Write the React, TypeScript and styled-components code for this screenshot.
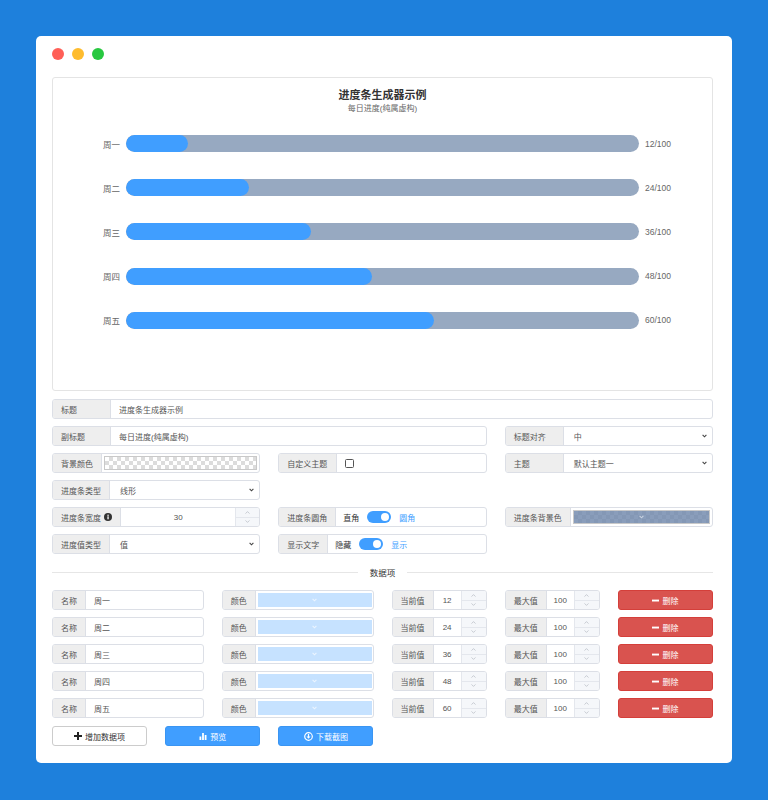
import * as React from 'react';
import styled, { createGlobalStyle } from 'styled-components';

const FONT = `"Liberation Sans", "Noto Sans CJK SC", sans-serif`;

interface Item {
    name: string;
    value: number;
    max: number;
}

const items: Item[] = [
    { name: '周一', value: 12, max: 100 },
    { name: '周二', value: 24, max: 100 },
    { name: '周三', value: 36, max: 100 },
    { name: '周四', value: 48, max: 100 },
    { name: '周五', value: 60, max: 100 },
];

const GlobalStyle = createGlobalStyle`
    html, body {
        margin: 0;
        padding: 0;
        background: #1e80dc;
    }
    body {
        font-family: ${FONT};
    }
`;

const Page = styled.div`
    box-sizing: border-box;
    min-height: 800px;
    padding: 36px 36px 37px;
`;

const Window = styled.div`
    background: #fff;
    border-radius: 5px;
    padding: 12px 19px 17px 16px;
`;

const Dots = styled.div`
    display: flex;
    gap: 8px;
    padding-left: 0;
    margin-bottom: 17px;
`;

const Dot = styled.span<{ $color: string }>`
    width: 12px;
    height: 12px;
    border-radius: 50%;
    background: ${p => p.$color};
`;

const ChartPanel = styled.div`
    box-sizing: border-box;
    height: 314px;
    border: 1px solid #e4e4e4;
    border-radius: 3px;
    padding-top: 10px;
`;

const ChartTitle = styled.div`
    text-align: center;
    font-size: 11px;
    font-weight: bold;
    line-height: 14px;
    color: #333;
`;

const ChartSubtitle = styled.div`
    text-align: center;
    font-size: 8px;
    line-height: 10px;
    margin-top: 2px;
    color: #666;
`;

const BarList = styled.div`
    display: flex;
    flex-direction: column;
    gap: 27.2px;
    margin-top: 21px;
`;

const BarRow = styled.div`
    display: grid;
    grid-template-columns: 67px 1fr 67px;
    column-gap: 6px;
    align-items: center;
`;

const BarLabel = styled.div`
    text-align: right;
    font-size: 8.5px;
    color: #666;
`;

const Track = styled.div`
    height: 17px;
    border-radius: 9px;
    background: #97a9c1;
    overflow: hidden;
`;

const Fill = styled.div`
    height: 100%;
    border-radius: 9px;
    background: #409eff;
`;

const BarValue = styled.div`
    font-size: 8.5px;
    color: #666;
`;

const Grid = styled.div<{ $top?: number }>`
    display: grid;
    grid-template-columns: repeat(12, 1fr);
    column-gap: 18px;
    row-gap: 7px;
    margin-top: ${p => p.$top ?? 0}px;
`;

const Spacer = styled.div<{ $span: number }>`
    grid-column: span ${p => p.$span};
`;

const Group = styled.div<{ $span: number }>`
    grid-column: span ${p => p.$span};
    display: flex;
    height: 20px;
    box-sizing: border-box;
    min-width: 0;
    border: 1px solid #dcdfe6;
    border-radius: 3px;
    overflow: hidden;
    background: #fff;
`;

const Addon = styled.div<{ $w: number }>`
    flex: 0 0 ${p => p.$w}px;
    box-sizing: border-box;
    display: flex;
    align-items: center;
    gap: 3px;
    padding: 0 8px;
    background: #eee;
    border-right: 1px solid #dcdfe6;
    color: #555;
    font-size: 8px;
    white-space: nowrap;
`;

const TextField = styled.input`
    flex: 1;
    min-width: 0;
    border: 0;
    outline: 0;
    padding: 0 8px;
    background: transparent;
    font: 8px ${FONT};
    color: #555;
`;

const SelectBox = styled.div`
    flex: 1;
    display: flex;
    align-items: center;
    justify-content: space-between;
    padding: 0 5px 0 10px;
    font-size: 8px;
    color: #555;
`;

const Swatch = styled.div<{ $tint?: string }>`
    flex: 1;
    margin: 2px;
    display: flex;
    align-items: center;
    justify-content: center;
    border: 1px solid #c9c9c9;
    background: ${p => (p.$tint ? `linear-gradient(${p.$tint}, ${p.$tint}), ` : '')}
        repeating-conic-gradient(#dcdcdc 0% 25%, #fff 0% 50%) 0 0 / 8px 8px;
`;

const ColorSwatch = styled.div<{ $color: string }>`
    flex: 1;
    margin: 2px 1px 2px 2px;
    display: flex;
    align-items: center;
    justify-content: center;
    background: ${p => p.$color};
`;

const CheckField = styled.div`
    flex: 1;
    display: flex;
    align-items: center;
    padding: 0 8px;
`;

const Checkbox = styled.span`
    width: 7px;
    height: 7px;
    border: 1px solid #555;
    border-radius: 1.5px;
`;

const NumberText = styled.div`
    flex: 1;
    display: flex;
    align-items: center;
    justify-content: center;
    font-size: 8px;
    color: #555;
`;

const Spinner = styled.div<{ $w: number }>`
    flex: 0 0 ${p => p.$w}px;
    display: flex;
    flex-direction: column;
    border-left: 1px solid #e4e7ed;
    background: #f5f7fa;
`;

const SpinHalf = styled.div<{ $top?: boolean }>`
    flex: 1;
    display: flex;
    align-items: center;
    justify-content: center;
    border-bottom: ${p => (p.$top ? '1px solid #e4e7ed' : '0')};
`;

const SwitchField = styled.div<{ $pad: number }>`
    flex: 1;
    display: flex;
    align-items: center;
    gap: 8px;
    padding: 0 ${p => p.$pad}px;
    font-size: 8px;
`;

const OffText = styled.span`
    color: #303133;
`;

const OnText = styled.span`
    color: #409eff;
`;

const Switch = styled.span`
    display: flex;
    justify-content: flex-end;
    align-items: center;
    box-sizing: border-box;
    width: 24px;
    height: 12px;
    padding: 0 2px;
    border-radius: 6px;
    background: #409eff;
`;

const Knob = styled.span`
    width: 8px;
    height: 8px;
    border-radius: 50%;
    background: #fff;
`;

const Divider = styled.div`
    display: flex;
    align-items: center;
    gap: 12px;
    height: 12px;
    margin: 12px 0;
    font-size: 8.5px;
    color: #333;
`;

const Line = styled.div`
    flex: 1;
    height: 1px;
    background: #e6e6e6;
`;

const Button = styled.button<{ $variant: 'default' | 'primary' | 'danger'; $span: number }>`
    grid-column: span ${p => p.$span};
    height: 20px;
    margin: 0;
    padding: 0;
    display: flex;
    align-items: center;
    justify-content: center;
    gap: 3px;
    border-radius: 3px;
    font: 8px ${FONT};
    cursor: pointer;
    border: 1px solid
        ${p => (p.$variant === 'danger' ? '#d43f3a' : p.$variant === 'primary' ? '#3a95f2' : '#ccc')};
    background: ${p => (p.$variant === 'danger' ? '#d9534f' : p.$variant === 'primary' ? '#409eff' : '#fff')};
    color: ${p => (p.$variant === 'default' ? '#333' : '#fff')};
`;

const ButtonRow = styled.div`
    grid-column: span 12;
    display: grid;
    grid-template-columns: repeat(12, 1fr);
    column-gap: 18px;
    margin-top: 1px;
`;

const Chevron: React.FC<{ color?: string }> = ({ color = '#444' }) => (
    <svg width="5" height="4" viewBox="0 0 5 4">
        <polyline points="0.6,0.8 2.5,2.8 4.4,0.8" fill="none" stroke={color} strokeWidth="1.1" />
    </svg>
);

const Caret: React.FC<{ up?: boolean }> = ({ up }) => (
    <svg width="5" height="3" viewBox="0 0 5 3">
        <polyline
            points={up ? '0.5,2.6 2.5,0.6 4.5,2.6' : '0.5,0.4 2.5,2.4 4.5,0.4'}
            fill="none"
            stroke="#b4b9c2"
            strokeWidth="0.7"
        />
    </svg>
);

const InfoIcon = () => (
    <svg width="8" height="8" viewBox="0 0 8 8">
        <circle cx="4" cy="4" r="4" fill="#333" />
        <rect x="3.4" y="3.3" width="1.3" height="3" fill="#fff" />
        <circle cx="4.05" cy="2.2" r="0.75" fill="#fff" />
    </svg>
);

const MinusIcon = () => (
    <svg width="7" height="7" viewBox="0 0 7 7">
        <rect x="0" y="2.6" width="7" height="1.9" fill="#fff" />
    </svg>
);

const PlusIcon = () => (
    <svg width="8" height="8" viewBox="0 0 8 8">
        <rect x="3" y="0" width="2" height="8" fill="#222" />
        <rect x="0" y="3" width="8" height="2" fill="#222" />
    </svg>
);

const ChartIcon = () => (
    <svg width="8" height="8" viewBox="0 0 8 8">
        <rect x="0.5" y="4.5" width="1.8" height="3.5" fill="#fff" />
        <rect x="3.1" y="1" width="1.8" height="7" fill="#fff" />
        <rect x="5.7" y="3" width="1.8" height="5" fill="#fff" />
    </svg>
);

const DownloadIcon = () => (
    <svg width="9" height="9" viewBox="0 0 9 9">
        <circle cx="4.5" cy="4.5" r="3.8" fill="none" stroke="#fff" strokeWidth="1.2" />
        <rect x="3.9" y="2" width="1.2" height="3" fill="#fff" />
        <polygon points="2.5,4.6 6.5,4.6 4.5,6.8" fill="#fff" />
    </svg>
);

const Toggle: React.FC<{ off: string; on: string; pad: number }> = ({ off, on, pad }) => (
    <SwitchField $pad={pad}>
        <OffText>{off}</OffText>
        <Switch>
            <Knob />
        </Switch>
        <OnText>{on}</OnText>
    </SwitchField>
);

const NumberInput: React.FC<{ value: number; spin: number }> = ({ value, spin }) => (
    <>
        <NumberText>{value}</NumberText>
        <Spinner $w={spin}>
            <SpinHalf $top>
                <Caret up />
            </SpinHalf>
            <SpinHalf>
                <Caret />
            </SpinHalf>
        </Spinner>
    </>
);

const Select: React.FC<{ value: string }> = ({ value }) => (
    <SelectBox>
        <span>{value}</span>
        <Chevron />
    </SelectBox>
);

const App: React.FC = () => {
    return (
        <Page>
            <GlobalStyle />
            <Window>
                <Dots>
                    <Dot $color="#ff5f57" />
                    <Dot $color="#febc2e" />
                    <Dot $color="#28c840" />
                </Dots>

                <ChartPanel>
                    <ChartTitle>进度条生成器示例</ChartTitle>
                    <ChartSubtitle>每日进度(纯属虚构)</ChartSubtitle>
                    <BarList>
                        {items.map(item => (
                            <BarRow key={item.name}>
                                <BarLabel>{item.name}</BarLabel>
                                <Track>
                                    <Fill style={{ width: `${(item.value / item.max) * 100}%` }} />
                                </Track>
                                <BarValue>{`${item.value}/${item.max}`}</BarValue>
                            </BarRow>
                        ))}
                    </BarList>
                </ChartPanel>

                <Grid $top={8}>
                    <Group $span={12}>
                        <Addon $w={58}>标题</Addon>
                        <TextField readOnly value="进度条生成器示例" />
                    </Group>

                    <Group $span={8}>
                        <Addon $w={58}>副标题</Addon>
                        <TextField readOnly value="每日进度(纯属虚构)" />
                    </Group>
                    <Group $span={4}>
                        <Addon $w={58}>标题对齐</Addon>
                        <Select value="中" />
                    </Group>

                    <Group $span={4}>
                        <Addon $w={49}>背景颜色</Addon>
                        <Swatch />
                    </Group>
                    <Group $span={4}>
                        <Addon $w={58}>自定义主题</Addon>
                        <CheckField>
                            <Checkbox />
                        </CheckField>
                    </Group>
                    <Group $span={4}>
                        <Addon $w={58}>主题</Addon>
                        <Select value="默认主题一" />
                    </Group>

                    <Group $span={4}>
                        <Addon $w={56}>进度条类型</Addon>
                        <Select value="线形" />
                    </Group>
                    <Spacer $span={8} />

                    <Group $span={4}>
                        <Addon $w={66}>
                            进度条宽度
                            <InfoIcon />
                        </Addon>
                        <NumberInput value={30} spin={23} />
                    </Group>
                    <Group $span={4}>
                        <Addon $w={55}>进度条圆角</Addon>
                        <Toggle off="直角" on="圆角" pad={7} />
                    </Group>
                    <Group $span={4}>
                        <Addon $w={64}>进度条背景色</Addon>
                        <Swatch $tint="rgba(112, 136, 172, 0.82)">
                            <Chevron color="#c8d2e0" />
                        </Swatch>
                    </Group>

                    <Group $span={4}>
                        <Addon $w={56}>进度值类型</Addon>
                        <Select value="值" />
                    </Group>
                    <Group $span={4}>
                        <Addon $w={48}>显示文字</Addon>
                        <Toggle off="隐藏" on="显示" pad={7} />
                    </Group>
                </Grid>

                <Divider>
                    <Line />
                    数据项
                    <Line />
                </Divider>

                <Grid>
                    {items.map(item => (
                        <React.Fragment key={item.name}>
                            <Group $span={3}>
                                <Addon $w={30}>名称</Addon>
                                <TextField readOnly value={item.name} />
                            </Group>
                            <Group $span={3}>
                                <Addon $w={31}>颜色</Addon>
                                <ColorSwatch $color="#c6e2ff">
                                    <Chevron color="#ecf5ff" />
                                </ColorSwatch>
                            </Group>
                            <Group $span={2}>
                                <Addon $w={39}>当前值</Addon>
                                <NumberInput value={item.value} spin={24} />
                            </Group>
                            <Group $span={2}>
                                <Addon $w={39}>最大值</Addon>
                                <NumberInput value={item.max} spin={24} />
                            </Group>
                            <Button $variant="danger" $span={2}>
                                <MinusIcon />
                                删除
                            </Button>
                        </React.Fragment>
                    ))}
                    <ButtonRow>
                        <Button $variant="default" $span={2}>
                            <PlusIcon />
                            增加数据项
                        </Button>
                        <Button $variant="primary" $span={2}>
                            <ChartIcon />
                            预览
                        </Button>
                        <Button $variant="primary" $span={2}>
                            <DownloadIcon />
                            下载截图
                        </Button>
                    </ButtonRow>
                </Grid>
            </Window>
        </Page>
    );
};

export default App;
